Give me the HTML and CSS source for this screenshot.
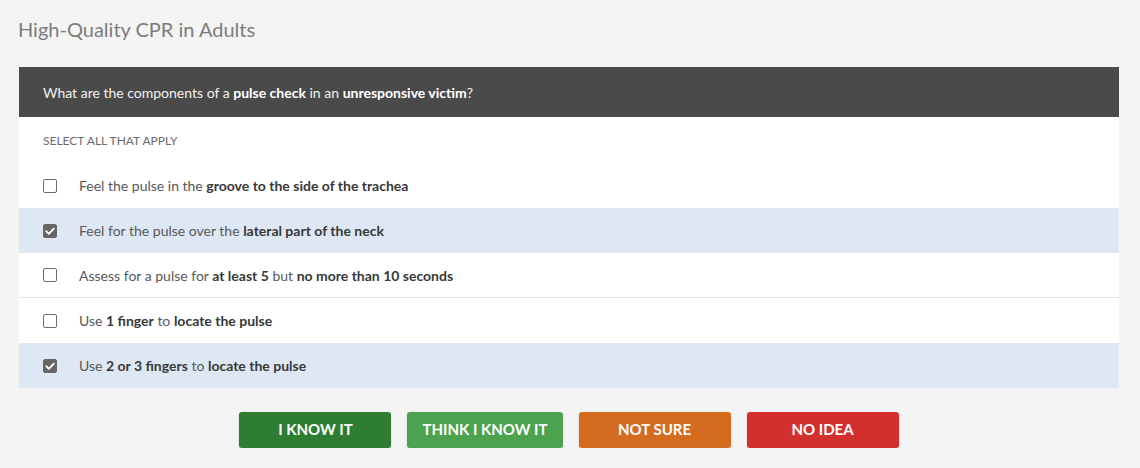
FILE: index.html
```html
<!DOCTYPE html>
<html lang="en">
<head>
<meta charset="utf-8">
<title>High-Quality CPR in Adults</title>
<link rel="stylesheet" href="styles.css">
</head>
<body>
<div class="page">
  <h1 class="title">High-Quality CPR in Adults</h1>
  <section class="card">
    <div class="question"><span>What are the components of a <b>pulse check</b> in an <b>unresponsive victim</b>?</span></div>
    <div class="hint">SELECT ALL THAT APPLY</div>
    <ul class="options">
      <li class="option">
        <span class="box"></span>
        <span class="label">Feel the pulse in the <b>groove to the side of the trachea</b></span>
      </li>
      <li class="option selected">
        <span class="box checked"><svg viewBox="0 0 14 14" width="14" height="14"><path d="M3.2 7.2l2.6 2.6 5-5.2" fill="none" stroke="#fff" stroke-width="1.8" stroke-linecap="round" stroke-linejoin="round"/></svg></span>
        <span class="label">Feel for the pulse over the <b>lateral part of the neck</b></span>
      </li>
      <li class="option divided">
        <span class="box"></span>
        <span class="label">Assess for a pulse for <b>at least 5</b> but <b>no more than 10 seconds</b></span>
      </li>
      <li class="option">
        <span class="box"></span>
        <span class="label">Use <b>1 finger</b> to <b>locate the pulse</b></span>
      </li>
      <li class="option selected">
        <span class="box checked"><svg viewBox="0 0 14 14" width="14" height="14"><path d="M3.2 7.2l2.6 2.6 5-5.2" fill="none" stroke="#fff" stroke-width="1.8" stroke-linecap="round" stroke-linejoin="round"/></svg></span>
        <span class="label">Use <b>2 or 3 fingers</b> to <b>locate the pulse</b></span>
      </li>
    </ul>
  </section>
  <div class="actions">
    <button class="btn know">I KNOW IT</button>
    <button class="btn think">THINK I KNOW IT</button>
    <button class="btn unsure">NOT SURE</button>
    <button class="btn noidea">NO IDEA</button>
  </div>
</div>
</body>
</html>
```

FILE: styles.css
```css
* { box-sizing: border-box; }
html, body {
  margin: 0;
  padding: 0;
  background: #f4f4f4;
  font-family: Lato, "Open Sans", "Liberation Sans", sans-serif;
}
.page {
  padding: 16px 21px 0 19px;
}
.title {
  margin: 0 0 25px -1px;
  font-size: 20px;
  line-height: 26px;
  font-weight: 400;
  color: #7c7c7c;
}
.card {
  background: #ffffff;
}
.question {
  height: 50px;
  display: flex;
  align-items: center;
  padding: 0 24px;
  background: #4a4a4a;
  color: #f2f2f2;
  font-size: 14px;
}
.question b { font-weight: 700; color: #ffffff; }
.hint {
  height: 46px;
  display: flex;
  align-items: center;
  padding: 0 24px;
  font-size: 12px;
  color: #6b6b6b;
}
.options {
  list-style: none;
  margin: 0;
  padding: 0;
}
.option {
  height: 45px;
  display: flex;
  align-items: center;
  gap: 22px;
  padding: 0 24px;
  font-size: 14px;
  color: #585858;
}
.option.selected { background: #dde8f4; }
.option.divided { border-bottom: 1px solid #e4e4e4; height: 45px; }
.option b { font-weight: 700; color: #383838; }
.box {
  width: 14px;
  height: 14px;
  flex: none;
  border: 1.7px solid #6a6a6a;
  border-radius: 2px;
  background: #ffffff;
  display: flex;
  align-items: center;
  justify-content: center;
}
.box.checked {
  background: #666666;
  border-color: #666666;
}
.box svg { display: block; flex: none; margin: -2px; }
.actions {
  display: flex;
  justify-content: center;
  gap: 16px;
  padding-top: 24px;
}
.btn {
  min-width: 152px;
  height: 36px;
  padding: 0 15px 3px;
  border: none;
  border-radius: 3px;
  font-family: Lato, "Open Sans", "Liberation Sans", sans-serif;
  font-size: 15px;
  font-weight: 700;
  color: #ffffff;
  box-shadow: 0 1px 2px rgba(0, 0, 0, 0.18);
  cursor: pointer;
}
.know { background: #2e7d32; }
.think { background: #4ca24f; }
.unsure { background: #d56b1e; }
.noidea { background: #d32f2f; }
```
